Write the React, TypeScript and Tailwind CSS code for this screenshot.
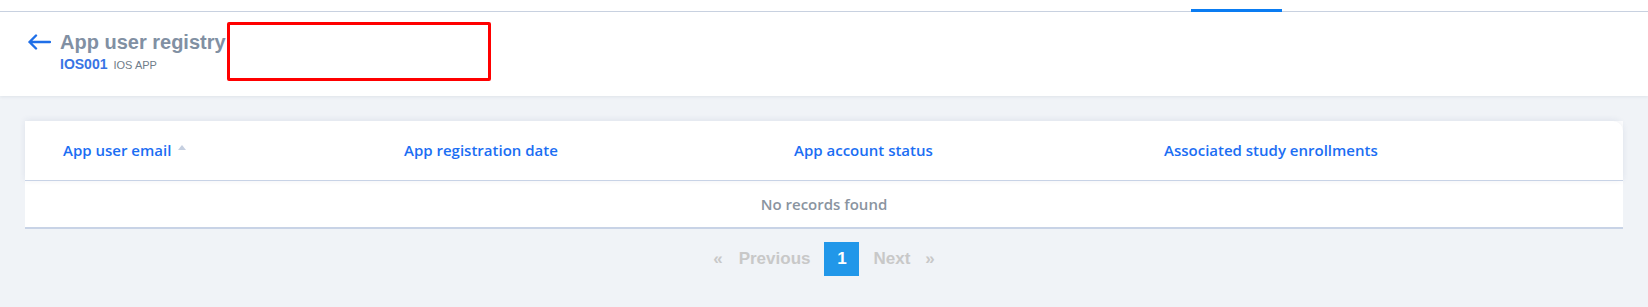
import { useState } from "react";

const columns = [
    { label: "App user email", width: "w-[341px]", sortable: true },
    { label: "App registration date", width: "w-[390px]", sortable: false },
    { label: "App account status", width: "w-[370px]", sortable: false },
    { label: "Associated study enrollments", width: "flex-1", sortable: false },
];

function BackArrow() {
    return (
        <svg width="24" height="16" viewBox="0 0 24 16" fill="none" className="shrink-0">
            <path d="M23 8H2.5M9 1.5L2.5 8L9 14.5" stroke="#1f6fe8" strokeWidth="2.4" strokeLinecap="round" strokeLinejoin="round" />
        </svg>
    );
}

export default function App() {
    const [page] = useState(1);

    return (
        <div className="min-h-[307px] bg-[#f0f3f7] font-['Liberation_Sans',Arial,sans-serif]">
            <header className="relative bg-white h-[96px] shadow-[0_1px_3px_rgba(30,50,80,0.08)]">
                <div className="flex h-[12px] border-b border-[#c8d1e0]">
                    <div className="ml-[1191px] w-[91px] h-[3px] self-end -mb-px bg-[#0a7cf2]"></div>
                </div>

                <div className="flex items-start pl-[27px] pt-[18px]">
                    <div className="h-[24px] flex items-center mr-[9px]">
                        <BackArrow />
                    </div>
                    <div className="flex flex-col">
                        <h1 className="text-[20px] leading-[24px] font-bold text-[#8190a3]">App user registry</h1>
                        <div className="mt-[1px] flex items-baseline gap-[6px] leading-[18px]">
                            <span className="text-[14px] font-bold text-[#3874e4]">IOS001</span>
                            <span className="text-[11px] text-[#6f7c8a]">IOS APP</span>
                        </div>
                    </div>
                </div>

                {/* redaction box */}
                <div className="absolute left-[227px] top-[22px] w-[264px] h-[59px] border-[3px] border-[#f00] rounded-[2px]"></div>
            </header>

            <main className="px-[25px] pt-[25px]">
                <div className="bg-white">
                    <div className="flex items-center h-[60px] border-b border-[#c8d3e6] rounded-tr-[10px] shadow-[0_-1px_6px_rgba(40,70,120,0.09)] font-['Open_Sans',sans-serif]">
                        {columns.map((col) => (
                            <div key={col.label} className={`${col.width} pl-[38px] flex items-center gap-[7px]`}>
                                <span className="text-[15px] font-semibold text-[#1b6ef3]">{col.label}</span>
                                {col.sortable && (
                                    <svg width="8" height="5" viewBox="0 0 8 5" className="mb-[6px]">
                                        <path d="M4 0L8 5H0Z" fill="#c5cfe0" />
                                    </svg>
                                )}
                            </div>
                        ))}
                    </div>
                    <div className="h-[48px] flex items-center justify-center border-b-2 border-[#c8d3e6] font-['Open_Sans',sans-serif]">
                        <span className="text-[15px] font-semibold text-[#8a949f]">No records found</span>
                    </div>
                </div>

                <nav className="mt-[13px] flex items-center justify-center text-[17px] font-bold text-[#c8c8c8]">
                    <span className="mr-[16px]">«</span>
                    <span className="mr-[14px]">Previous</span>
                    <span className="w-[35px] h-[34px] flex items-center justify-center bg-[#2197e9] text-white">{page}</span>
                    <span className="ml-[14px]">Next</span>
                    <span className="ml-[15px]">»</span>
                </nav>
            </main>
        </div>
    );
}
